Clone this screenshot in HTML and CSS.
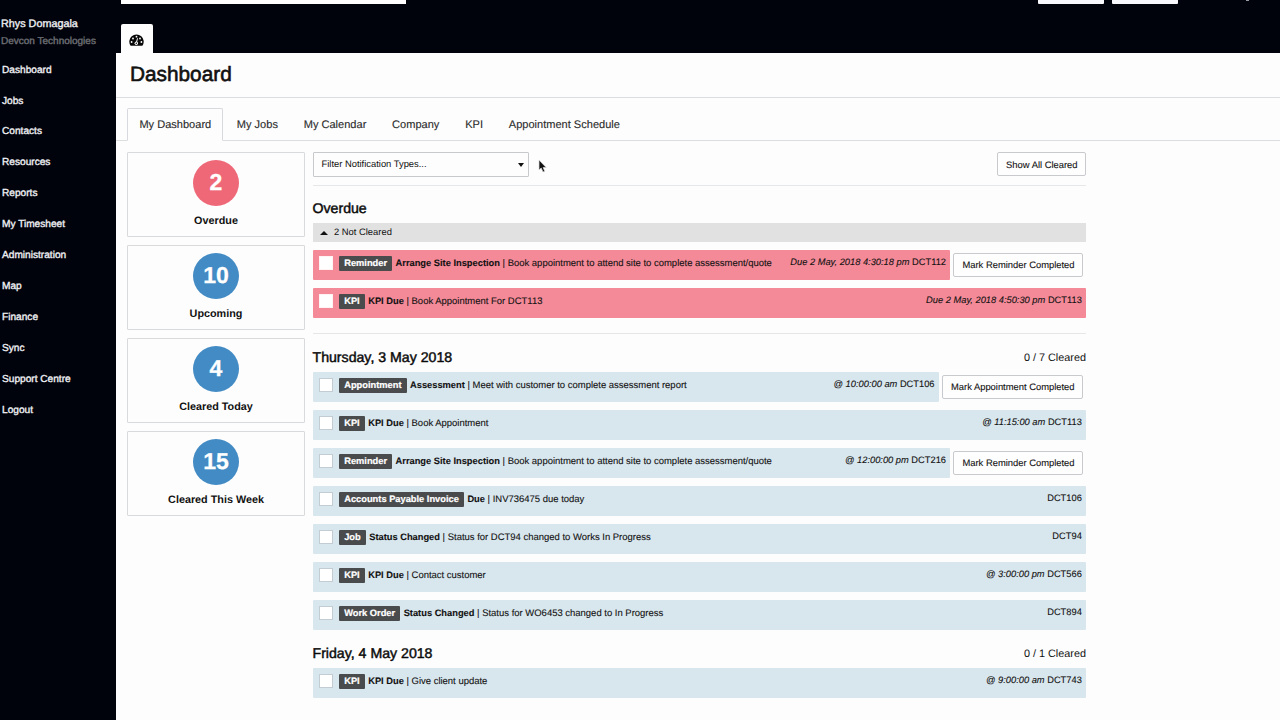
FILE: index.html
```html
<!DOCTYPE html>
<html lang="en">
<head>
<meta charset="utf-8">
<title>Dashboard</title>
<link rel="stylesheet" href="styles.css">
</head>
<body>
<aside class="sidebar">
  <div class="user">Rhys Domagala</div>
  <div class="company">Devcon Technologies</div>
  <nav class="nav">
    <a>Dashboard</a><a>Jobs</a><a>Contacts</a><a>Resources</a><a>Reports</a><a>My Timesheet</a><a>Administration</a><a>Map</a><a>Finance</a><a>Sync</a><a>Support Centre</a><a>Logout</a>
  </nav>
</aside>
<div class="page">
  <header class="topbar">
    <div class="top-controls">
      <div class="search"></div><div class="top-btn first"></div><div class="top-btn"></div><div class="dot"></div>
    </div>
    <div class="page-tab">
      <svg width="15" height="12" viewBox="0 0 15 12"><path d="M1.6 11.8A7.2 7.2 0 1 1 13.4 11.8Z" fill="#080808"/><g fill="#fff"><circle cx="2.6" cy="8" r=".9"/><circle cx="4" cy="4.5" r=".9"/><circle cx="7.5" cy="2.7" r=".9"/><circle cx="11" cy="4.5" r=".9"/><circle cx="12.4" cy="8" r=".9"/><circle cx="7.3" cy="9.3" r="1.7"/></g><path d="M7.3 9.2L8.5 4.3" stroke="#fff" stroke-width="1"/><circle cx="7.3" cy="9.3" r=".8" fill="#080808"/></svg>
    </div>
  </header>
  <h1 class="title">Dashboard</h1>
  <div class="tabs">
    <a class="tab active">My Dashboard</a><a class="tab">My Jobs</a><a class="tab">My Calendar</a><a class="tab">Company</a><a class="tab">KPI</a><a class="tab">Appointment Schedule</a>
  </div>
  <div class="content">
    <section class="cards">
      <div class="card"><div class="count red">2</div><div class="caption">Overdue</div></div>
      <div class="card"><div class="count">10</div><div class="caption">Upcoming</div></div>
      <div class="card"><div class="count">4</div><div class="caption">Cleared Today</div></div>
      <div class="card"><div class="count">15</div><div class="caption">Cleared This Week</div></div>
    </section>
    <main class="feed">
      <div class="toolbar">
        <div class="select"><span>Filter Notification Types...</span><i class="caret"></i></div>
        <div class="btn show-all">Show All Cleared</div>
      </div>
      <h2 class="heading overdue-heading">Overdue</h2>
      <div class="group"><i class="caret-up"></i><span>2 Not Cleared</span></div>
      <div class="rows">
        <div class="row"><div class="item late"><i class="check"></i><span class="label">Reminder</span><span class="text"><b>Arrange Site Inspection</b> | Book appointment to attend site to complete assessment/quote</span><span class="meta"><em>Due 2 May, 2018 4:30:18 pm</em> DCT112</span></div><div class="btn">Mark Reminder Completed</div></div>
        <div class="row"><div class="item late"><i class="check"></i><span class="label">KPI</span><span class="text"><b>KPI Due</b> | Book Appointment For DCT113</span><span class="meta"><em>Due 2 May, 2018 4:50:30 pm</em> DCT113</span></div></div>
      </div>
      <div class="day-head ruled"><h2 class="heading">Thursday, 3 May 2018</h2><span>0 / 7 Cleared</span></div>
      <div class="rows">
        <div class="row"><div class="item"><i class="check"></i><span class="label">Appointment</span><span class="text"><b>Assessment</b> | Meet with customer to complete assessment report</span><span class="meta"><em>@ 10:00:00 am</em> DCT106</span></div><div class="btn">Mark Appointment Completed</div></div>
        <div class="row"><div class="item"><i class="check"></i><span class="label">KPI</span><span class="text"><b>KPI Due</b> | Book Appointment</span><span class="meta"><em>@ 11:15:00 am</em> DCT113</span></div></div>
        <div class="row"><div class="item"><i class="check"></i><span class="label">Reminder</span><span class="text"><b>Arrange Site Inspection</b> | Book appointment to attend site to complete assessment/quote</span><span class="meta"><em>@ 12:00:00 pm</em> DCT216</span></div><div class="btn">Mark Reminder Completed</div></div>
        <div class="row"><div class="item"><i class="check"></i><span class="label">Accounts Payable Invoice</span><span class="text"><b>Due</b> | INV736475 due today</span><span class="meta">DCT106</span></div></div>
        <div class="row"><div class="item"><i class="check"></i><span class="label">Job</span><span class="text"><b>Status Changed</b> | Status for DCT94 changed to Works In Progress</span><span class="meta">DCT94</span></div></div>
        <div class="row"><div class="item"><i class="check"></i><span class="label">KPI</span><span class="text"><b>KPI Due</b> | Contact customer</span><span class="meta"><em>@ 3:00:00 pm</em> DCT566</span></div></div>
        <div class="row"><div class="item"><i class="check"></i><span class="label">Work Order</span><span class="text"><b>Status Changed</b> | Status for WO6453 changed to In Progress</span><span class="meta">DCT894</span></div></div>
      </div>
      <div class="day-head last"><h2 class="heading">Friday, 4 May 2018</h2><span>0 / 1 Cleared</span></div>
      <div class="rows">
        <div class="row"><div class="item"><i class="check"></i><span class="label">KPI</span><span class="text"><b>KPI Due</b> | Give client update</span><span class="meta"><em>@ 9:00:00 am</em> DCT743</span></div></div>
      </div>
    </main>
  </div>
</div>
<svg class="cursor" width="9" height="14" viewBox="0 0 9 14"><path d="M1 1V11L3.2 9L5 13L6.8 12.2L5.1 8.5H8.2Z" fill="#111" stroke="#ddd" stroke-width=".7"/></svg>
</body>
</html>
```
FILE: styles.css
```css
* { box-sizing: border-box; }
body {
  margin: 0; width: 1280px; height: 720px; overflow: hidden; display: flex;
  background: #fdfdfd; color: #111; text-rendering: geometricPrecision;
  font-family: "Liberation Sans", Arial, sans-serif; font-size: 9.5px; line-height: 12px;
}
.sidebar { width: 116px; height: 720px; flex: none; background: #01030c; color: #f0f1f4; padding-top: 18px; }
.user { padding-left: 1px; font-size: 10.8px; line-height: 13px; -webkit-text-stroke: .35px #f0f1f4; }
.company { padding-left: 1px; margin-top: 5px; font-size: 10px; color: #6c6e73; -webkit-text-stroke: .4px #6c6e73; }
.nav { display: flex; flex-direction: column; padding: 6.6px 0 0 2px; }
.nav a { height: 30.95px; line-height: 31px; font-size: 10.15px; -webkit-text-stroke: .35px #f0f1f4; }
.page { flex: 1; min-width: 0; }
.topbar { height: 53px; background: #01030c; display: flex; flex-direction: column; justify-content: space-between; }
.top-controls { display: flex; height: 4px; padding-left: 5px; }
.search { width: 285px; background: #fff; }
.top-btn { width: 66px; background: #f8f9fc; border-radius: 0 0 1px 1px; margin-left: 8px; }
.top-btn.first { margin-left: 632px; }
.dot { width: 3px; height: 1px; margin-left: 68px; background: #9a9ba0; }
.page-tab { width: 32px; height: 29px; margin-left: 5px; background: #fdfdfd; border-radius: 2px 2px 0 0; padding: 10px 0 0 8px; }
.page-tab svg { display: block; }
.title { margin: 0; height: 45px; padding-left: 14px; border-bottom: 1px solid #dcdddf; font-size: 20.8px; line-height: 43px; font-weight: 400; -webkit-text-stroke: .6px #111; }
.tabs { display: flex; height: 43px; padding: 10px 0 0 11px; border-bottom: 1px solid #dcdddf; }
.tab { padding: 10px 11.6px 0 12.2px; height: 33px; font-size: 11.05px; line-height: 13px; color: #2c2c2c; border: 1px solid transparent; white-space: nowrap; -webkit-text-stroke: .12px #2c2c2c; }
.tab.active { width: 96px; border-color: #d8d9de; border-bottom-color: #fdfdfd; border-radius: 2px 2px 0 0; margin-right: .6px; padding: 10px 0 0 11.4px; }
.content { display: flex; padding: 11px 0 0 11px; gap: 7.5px; }
.cards { width: 178px; display: flex; flex-direction: column; gap: 8px; }
.card { height: 85px; border: 1px solid #d9dadc; border-radius: 1px; display: flex; flex-direction: column; align-items: center; }
.count { width: 46px; height: 46px; margin-top: 7px; border-radius: 50%; background: #428bc4; color: #fff; text-align: center; font-size: 23px; line-height: 44.5px; font-weight: 700; -webkit-text-stroke: .3px #fff; }
.count.red { background: #ee6878; }
.caption { margin-top: 8px; font-size: 10.8px; line-height: 14px; font-weight: 700; }
.feed { width: 773.5px; }
.toolbar { height: 33.5px; border-bottom: 1px solid #e6e7e8; display: flex; justify-content: space-between; }
.select { width: 216px; height: 25px; border: 1px solid #c8c9cb; border-radius: 1px; display: flex; align-items: center; justify-content: space-between; padding: 0 4px 1px 8px; font-size: 9.4px; }
.caret { border: 3px solid transparent; border-top: 4px solid #111; border-bottom: 0; margin-top: 2px; }
.btn { height: 24px; border: 1px solid #c8cacd; border-radius: 2px; background: #fefefe; padding: 5px 7.5px 0 8px; line-height: 12px; font-size: 9.4px; white-space: nowrap; -webkit-text-stroke: .1px #111; }
.show-all { padding-top: 6px; }
.heading { margin: 0; font-size: 14.15px; line-height: 18px; font-weight: 400; color: #0a0a0a; -webkit-text-stroke: .45px #0a0a0a; }
.overdue-heading { margin-top: 13px; }
.group { height: 19px; margin-top: 6px; background: #e1e1e1; display: flex; align-items: center; padding: 0 0 1px 6px; font-size: 9.4px; }
.caret-up { border: 4px solid transparent; border-bottom: 4px solid #111; border-top: 0; margin: 3px 6.5px 0 1px; }
.group + .rows { margin-top: 8px; }
.rows { display: flex; flex-direction: column; gap: 8px; }
.row { height: 30px; display: flex; align-items: flex-start; }
.row .btn { margin: 3px 3px 0 3.3px; }
.item { flex: 1; height: 30px; background: #d8e6ed; border-radius: 1px; display: flex; align-items: flex-start; padding: 0 4.2px 0 6.5px; white-space: nowrap; -webkit-text-stroke: .1px #161616; }
.item.late { background: #f48a98; }
.check { width: 14px; height: 14px; margin-top: 6.5px; border: 1px solid #c3ccd3; background: #fff; }
.late .check { border-color: #fff3f4; }
.label { height: 15px; margin: 6px 0 0 6px; padding: 0 5.2px; border-radius: 1px; background: #4a4b4d; color: #fff; font-size: 9.3px; font-weight: 700; line-height: 15px; -webkit-text-stroke: .2px #fff; }
.text { margin: 7px 0 0 3.3px; font-size: 9.47px; }
.text b { font-size: 9.3px; }
.meta { margin: 6px 0 0 auto; font-size: 9.3px; }
.day-head { height: 37.5px; padding-top: 14px; display: flex; justify-content: space-between; }
.day-head span { margin-top: 1px; font-size: 10.85px; line-height: 18px; }
.day-head.ruled { height: 39px; margin-top: 15px; border-top: 1px solid #e6e7e8; }
.day-head.last { height: 38px; }
.cursor { position: absolute; left: 538px; top: 159px; }
```
